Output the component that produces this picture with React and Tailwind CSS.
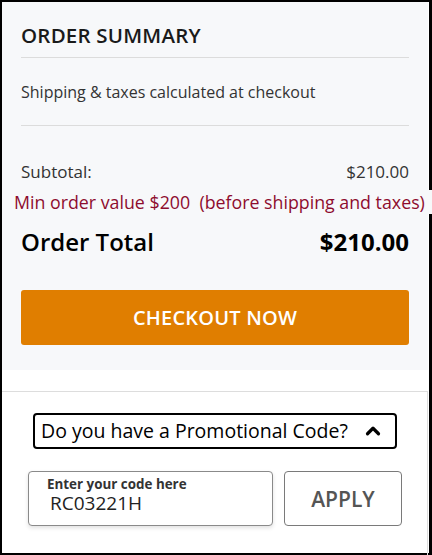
import { ChevronUp } from 'lucide-react'

function SummaryPanel() {
  return (
    <div className="bg-[#f7f8fa] mr-[1px] px-[19px] pt-[19px] pb-[25px]">
      <h2 className="text-[20.5px] leading-[28px] font-semibold text-[#1a1a1a] tracking-[0.2px]">ORDER SUMMARY</h2>
      <div className="mt-[8px] h-px bg-[#dcdcdc]" />
      <p className="mt-[23px] text-[16px] leading-[22px] text-[#333]">Shipping &amp; taxes calculated at checkout</p>
      <div className="mt-[22px] h-px bg-[#dcdcdc]" />
      <div className="mt-[35px] flex justify-between text-[17px] leading-[22px] text-[#333]">
        <span>Subtotal:</span>
        <span>$210.00</span>
      </div>
      <div className="relative -ml-[7px] -mr-[25px] mt-[7px] bg-[#f7f8fa] text-[17.8px] leading-[24px] text-[#8e0c2e] whitespace-pre">
        Min order value $200  (before shipping and taxes)
      </div>
      <div className="mt-[12px] flex justify-between items-center text-[24px] leading-[32px] text-black">
        <span className="font-semibold">Order Total</span>
        <span className="font-bold">$210.00</span>
      </div>
      <button className="mt-[32px] w-full h-[55px] rounded-[3px] bg-[#e07e00] text-white text-[20px] font-semibold tracking-[0.2px]">
        CHECKOUT NOW
      </button>
    </div>
  )
}

function PromoSection() {
  return (
    <div className="mt-[21px] border-t border-r border-[#dddddd] mr-[1px] pt-[21px] pb-[30px]">
      <button className="ml-[31px] w-[364px] h-[36px] border-2 border-black rounded-[4px] flex items-center px-[6px] text-[19.5px] text-black">
        <span>Do you have a Promotional Code?</span>
        <ChevronUp className="ml-auto mr-[5px]" size={22} strokeWidth={3.5} />
      </button>
      <div className="mt-[22px] ml-[26px] flex gap-[11px]">
        <div className="w-[245px] h-[55px] border border-[#8a8a8a] rounded-[4px] bg-white shadow-[0_2px_4px_rgba(0,0,0,0.12)] pl-[18px] pt-[4px]">
          <div className="text-[13.4px] leading-[16px] font-bold text-[#333]">Enter your code here</div>
          <div className="pl-[3px] text-[19px] leading-[22px] text-[#222]">RC03221H</div>
        </div>
        <button className="w-[118px] h-[55px] pt-[3px] border border-[#7a7a7a] rounded-[4px] bg-white text-[21px] font-semibold text-[#555]">
          APPLY
        </button>
      </div>
    </div>
  )
}

export default function App() {
  return (
    <div className="w-[432px] h-[555px] overflow-hidden bg-white font-['Open_Sans',sans-serif]">
      <div className="h-full border-l-2 border-t-2 border-r-[3px] border-b-2 border-black">
        <SummaryPanel />
        <PromoSection />
      </div>
    </div>
  )
}
